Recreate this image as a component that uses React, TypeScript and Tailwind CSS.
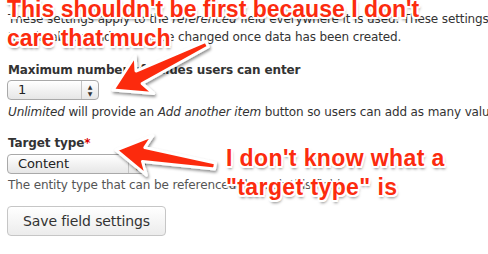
import React from 'react'

type Pt = [number, number]

// Skitch-style tapered arrow, from tail to tip
function arrowPoints(tail: Pt, tip: Pt, headLen = 32, headHalf = 19, neckHalf = 6, tailHalf = 2, notch = 6) {
  const dx = tip[0] - tail[0]
  const dy = tip[1] - tail[1]
  const len = Math.hypot(dx, dy)
  const ux = dx / len
  const uy = dy / len
  const nx = -uy
  const ny = ux
  const at = (back: number, side: number): Pt => [tip[0] - ux * back + nx * side, tip[1] - uy * back + ny * side]
  const pts: Pt[] = [
    tip,
    at(headLen, headHalf),
    at(headLen - notch, neckHalf),
    [tail[0] + nx * tailHalf, tail[1] + ny * tailHalf],
    [tail[0] - nx * tailHalf, tail[1] - ny * tailHalf],
    at(headLen - notch, -neckHalf),
    at(headLen, -headHalf),
  ]
  return pts.map((p) => `${p[0].toFixed(1)},${p[1].toFixed(1)}`).join(' ')
}

const noteText =
  "absolute font-['Liberation_Sans',Arial,sans-serif] font-bold text-[#fc2b0e] whitespace-nowrap [text-shadow:-2px_0_0_#fff,2px_0_0_#fff,0_-2px_0_#fff,0_2px_0_#fff,-1.5px_-1.5px_0_#fff,1.5px_-1.5px_0_#fff,-1.5px_1.5px_0_#fff,1.5px_1.5px_0_#fff,1px_3px_3px_rgba(0,0,0,0.5)]"

function Select({ value, width }: { value: string; width: string }) {
  return (
    <div
      className={`${width} h-[20px] flex items-stretch rounded-[4px] border border-[#a9a9a9] bg-gradient-to-b from-white to-[#e6e6e6] shadow-[inset_0_1px_0_#fff]`}
    >
      <div className="flex-1 flex items-center pl-[10px] text-[13px] text-[#222]">{value}</div>
      <div className="w-[17px] border-l border-[#c4c4c4] flex flex-col items-center justify-center text-[6px] leading-[7px] text-[#333]">
        <span>▲</span>
        <span>▼</span>
      </div>
    </div>
  )
}

export default function App() {
  return (
    <div className="relative w-[488px] h-[254px] overflow-hidden bg-white font-['DejaVu_Sans','Lucida_Grande',Verdana,sans-serif] text-[12px] tracking-[-0.12px] text-[#333]">
      <div className="pl-[8px] pt-[10px] flex flex-col items-start">
        <p className="leading-[18px] whitespace-nowrap">
          These settings apply to the <em>referenced</em> field everywhere it is used. These settings impact the way
        </p>
        <p className="leading-[18px] whitespace-nowrap">the database and cannot be changed once data has been created.</p>

        <label className="mt-[15px] leading-[18px] font-bold whitespace-nowrap">Maximum number of values users can enter</label>
        <div className="mt-[1px] -ml-[1px]">
          <Select value="1" width="w-[92px]" />
        </div>
        <p className="mt-[3px] leading-[18px] whitespace-nowrap">
          <em>Unlimited</em> will provide an <em>Add another item</em> button so users can add as many values as they like.
        </p>

        <label className="mt-[13px] leading-[18px] font-bold whitespace-nowrap">
          Target type<span className="text-[#d00]">*</span>
        </label>
        <div className="mt-[2px] -ml-[1px]">
          <Select value="Content" width="w-[139px]" />
        </div>
        <p className="mt-[2px] leading-[18px] whitespace-nowrap text-[#555]">The entity type that can be referenced through this field.</p>

        <button className="mt-[12px] -ml-[1px] w-[159px] h-[30px] rounded-[4px] border border-[#c6c6c6] bg-gradient-to-b from-white to-[#ececec] text-[14px] text-[#333]">
          Save field settings
        </button>
      </div>

      <svg className="absolute inset-0" width="488" height="254" viewBox="0 0 488 254">
        <defs>
          <filter id="shadow" x="-20%" y="-20%" width="140%" height="140%">
            <feDropShadow dx="1" dy="2" stdDeviation="1.5" floodColor="#000" floodOpacity="0.45" />
          </filter>
        </defs>
        <g filter="url(#shadow)" fill="#fc2b0e" stroke="#fff" strokeWidth="3" strokeLinejoin="round">
          <polygon points={arrowPoints([207, 44], [113, 90], 35, 21, 7, 3, 6)} />
          <polygon points={arrowPoints([215, 166], [116, 150], 34, 20, 7, 3, 6)} />
        </g>
      </svg>

      <div className={`${noteText} left-[7px] top-[-5px] text-[23px] leading-[29px] tracking-[0px]`}>
        This shouldn't be first because I don't
        <br />
        care that much
      </div>
      <div className={`${noteText} left-[226px] top-[144px] text-[23px] leading-[28.5px] tracking-[0.4px]`}>
        I don't know what a
        <br />
        "target type" is
      </div>
    </div>
  )
}
